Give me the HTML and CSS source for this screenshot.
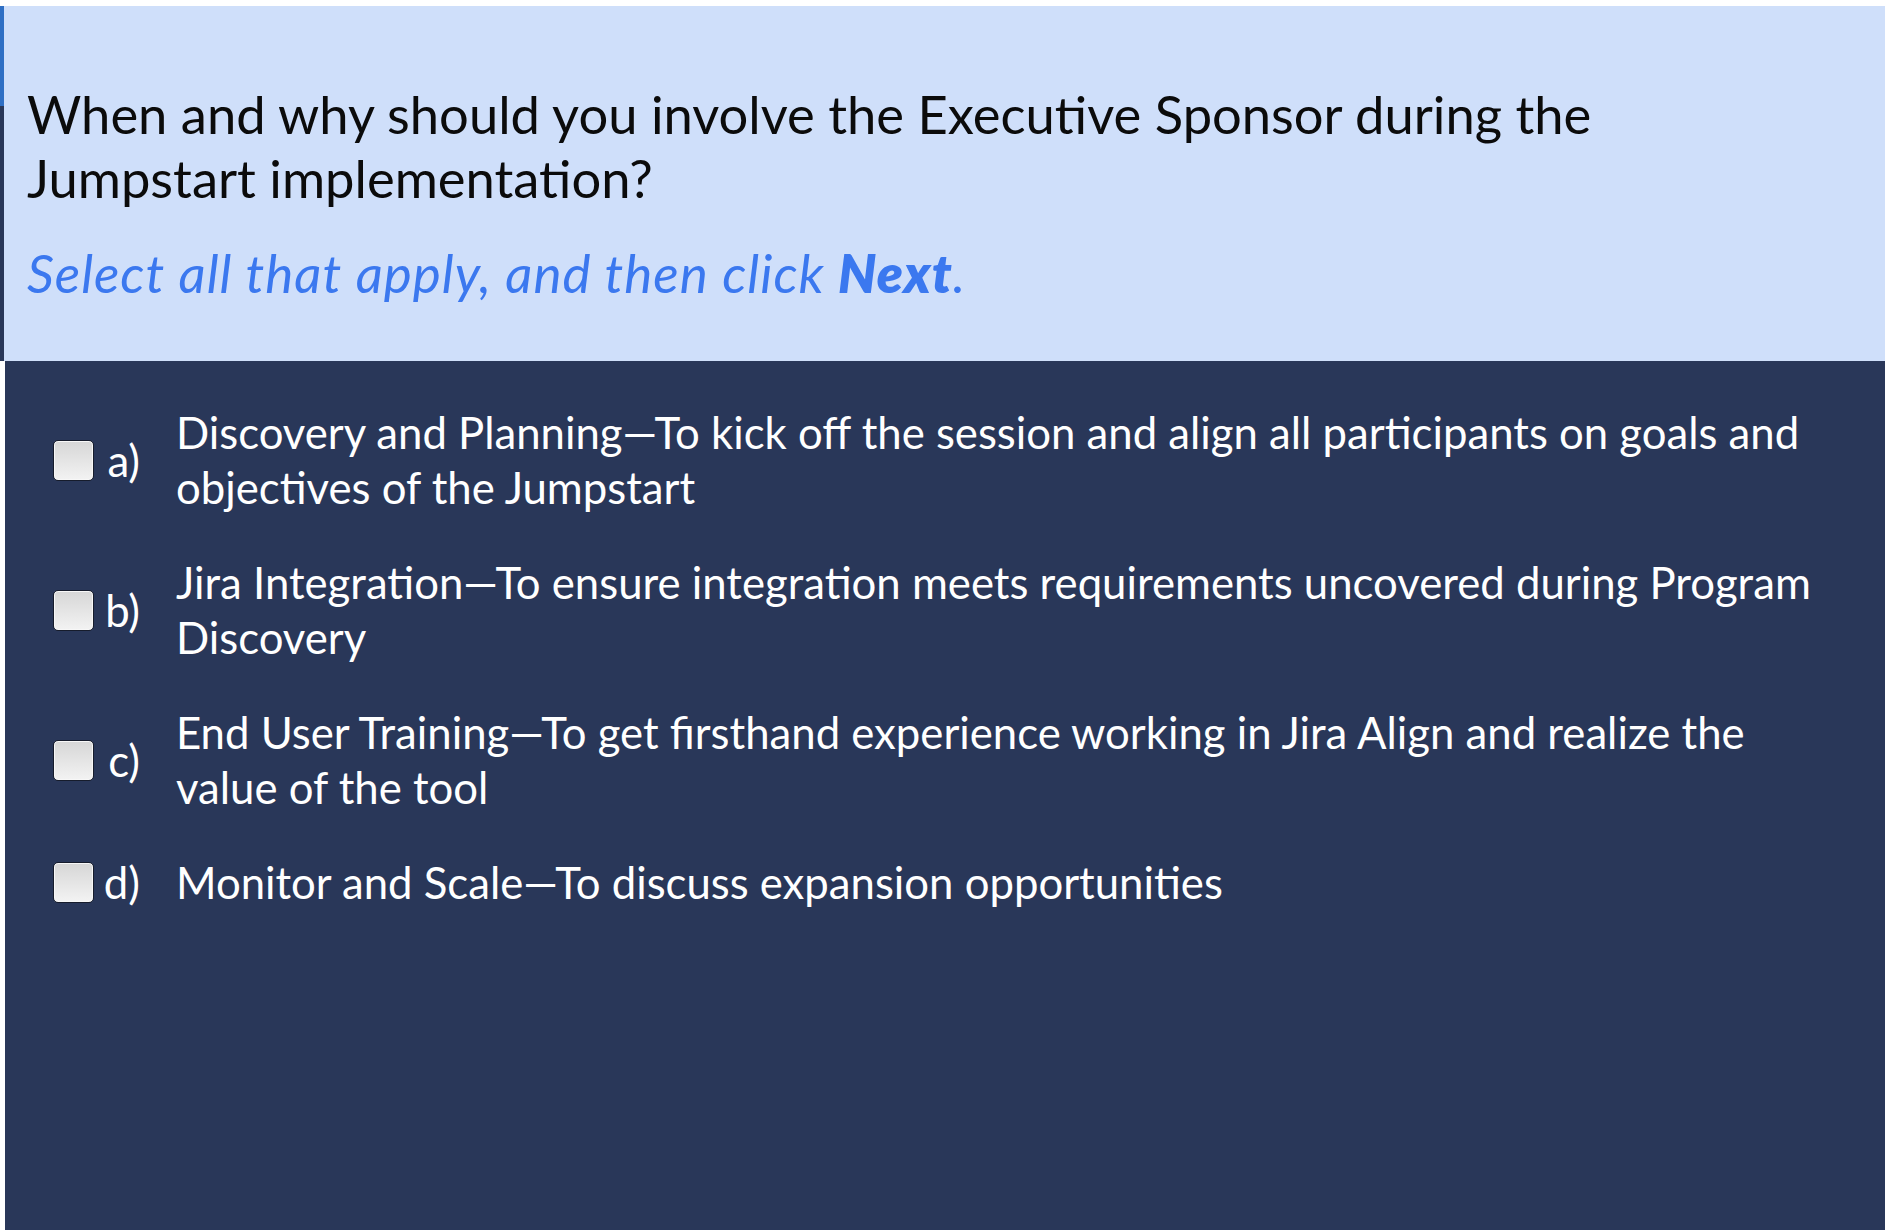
FILE: index.html
```html
<!DOCTYPE html>
<html lang="en">
<head>
<meta charset="utf-8">
<title>Question</title>
<link rel="stylesheet" href="styles.css">
</head>
<body>
<div class="page">
  <header class="prompt">
    <h1 class="question">When and why should you involve the Executive Sponsor during the Jumpstart implementation?</h1>
    <p class="instruction">Select all that apply, and then click <strong>Next</strong>.</p>
  </header>
  <main class="answers">
    <ul class="options">
      <li class="option">
        <span class="check"></span>
        <span class="letter">a)</span>
        <span class="text">Discovery and Planning—To kick off the session and align all participants on goals and objectives of the Jumpstart</span>
      </li>
      <li class="option">
        <span class="check"></span>
        <span class="letter">b)</span>
        <span class="text">Jira Integration—To ensure integration meets requirements uncovered during Program Discovery</span>
      </li>
      <li class="option">
        <span class="check"></span>
        <span class="letter">c)</span>
        <span class="text">End User Training—To get firsthand experience working in Jira Align and realize the value of the tool</span>
      </li>
      <li class="option">
        <span class="check"></span>
        <span class="letter">d)</span>
        <span class="text">Monitor and Scale—To discuss expansion opportunities</span>
      </li>
    </ul>
  </main>
</div>
</body>
</html>
```

FILE: styles.css
```css
html, body {
  margin: 0;
  padding: 0;
  background: #ffffff;
}

.page {
  min-height: 100vh;
  display: flex;
  flex-direction: column;
  padding-top: 6px;
  box-sizing: border-box;
  font-family: "Lato", "Open Sans", sans-serif;
}

.prompt {
  background: #cfdffa;
  border-left: 4px solid #293759;
  border-image: linear-gradient(to bottom, #2f6fc4 0, #2f6fc4 100px, #293759 100px, #293759 100%) 1;
  padding: 76px 40px 58px 23px;
}

.question {
  margin: 0;
  max-width: 1700px;
  font-size: 52.5px;
  line-height: 64px;
  font-weight: 400;
  color: #0b0b0b;
}

.instruction {
  margin: 33px 0 0 0;
  font-size: 53px;
  line-height: 60px;
  letter-spacing: 1px;
  font-style: italic;
  color: #3b78ef;
}

.instruction strong {
  font-weight: 800;
}

.answers {
  flex: 1;
  margin-left: 5px;
  background: #293759;
  padding: 44px 40px 40px 48px;
}

.options {
  list-style: none;
  margin: 0;
  padding: 0;
  display: flex;
  flex-direction: column;
  gap: 40px;
}

.option {
  display: flex;
  align-items: center;
  color: #ffffff;
  font-size: 43.7px;
  line-height: 55px;
}

.check {
  flex: none;
  width: 41px;
  height: 41px;
  box-sizing: border-box;
  border: 1px solid #161c2c;
  border-radius: 5px;
  background: linear-gradient(to bottom, #d6d6d6, #f3f3f3);
  box-shadow: inset 0 0 0 1px #f7f7f7;
}

.letter {
  flex: none;
  width: 46px;
  text-align: right;
}

.text {
  width: 1660px;
  margin-left: 36px;
}
```
